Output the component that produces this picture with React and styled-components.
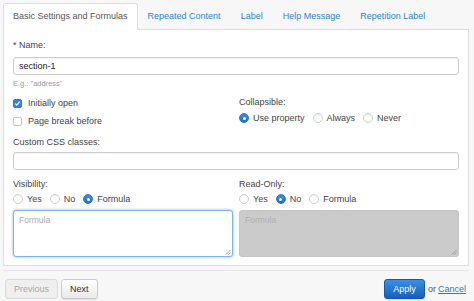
import React from 'react';
import styled, { createGlobalStyle } from 'styled-components';

const GlobalStyle = createGlobalStyle`
  html, body {
    margin: 0;
    padding: 0;
    background: #f7f7f7;
  }
  body {
    font-family: "Liberation Sans", Arial, sans-serif;
    font-size: 9px;
    color: #444;
  }
`;

const Page = styled.div`
  width: 474px;
  height: 301px;
  padding: 3px 5px 0 3px;
  box-sizing: border-box;
  overflow: hidden;
`;

const TabBar = styled.div`
  display: flex;
  height: 26px;
  align-items: stretch;
`;

const Tab = styled.div`
  padding: 0 9px;
  line-height: 25px;
  white-space: nowrap;
  color: ${p => (p.$active ? '#555' : '#2e85c7')};
  background: ${p => (p.$active ? '#fff' : 'transparent')};
  border: 1px solid ${p => (p.$active ? '#ddd' : 'transparent')};
  border-bottom: none;
  border-radius: 3px 3px 0 0;
  position: relative;
  z-index: 1;
  height: 27px;
  box-sizing: border-box;
`;

const Panel = styled.div`
  background: #fff;
  border: 1px solid #ddd;
  padding: 9px 9px 8px;
  width: 466px;
  box-sizing: border-box;
`;

const Label = styled.div`
  line-height: 12px;
  color: #444;
  margin-top: ${p => p.$mt || 0}px;
`;

const TextInput = styled.div`
  height: 18px;
  box-sizing: border-box;
  border: 1px solid #ccc;
  border-radius: 3px;
  background: #fff;
  padding: 0 5px;
  line-height: 16px;
  color: #222;
  font-size: 9px;
  margin-top: ${p => p.$mt || 0}px;
  box-shadow: inset 0 1px 1px rgba(0, 0, 0, 0.04);
`;

const Hint = styled.div`
  font-size: 7.5px;
  color: #999;
  line-height: 10px;
  margin-top: 4px;
`;

const Columns = styled.div`
  display: grid;
  grid-template-columns: 220px 220px;
  column-gap: 6px;
  margin-top: ${p => p.$mt || 0}px;
`;

const Col = styled.div`
  display: flex;
  flex-direction: column;
`;

const CheckRow = styled.label`
  display: flex;
  align-items: center;
  gap: 6px;
  height: 16px;
  margin-bottom: 2px;
  color: #444;
`;

const Box = styled.span`
  width: 9px;
  height: 9px;
  box-sizing: border-box;
  border-radius: 2px;
  display: inline-flex;
  align-items: center;
  justify-content: center;
  border: 1px solid ${p => (p.$checked ? '#2c78d8' : '#c4c4c4')};
  background: ${p => (p.$checked ? '#3484e4' : '#fff')};
`;

const RadioRow = styled.div`
  display: flex;
  align-items: center;
  height: ${p => p.$h || 14}px;
  margin-top: ${p => p.$mt || 0}px;
`;

const RadioItem = styled.label`
  display: flex;
  align-items: center;
  gap: 4px;
  margin-right: 8px;
  color: #444;
`;

const Dot = styled.span`
  width: 10px;
  height: 10px;
  box-sizing: border-box;
  border-radius: 50%;
  display: inline-flex;
  align-items: center;
  justify-content: center;
  border: 1px solid ${p => (p.$on ? '#2676d6' : '#cfcfcf')};
  background: ${p => (p.$on ? 'linear-gradient(#3b8ded, #1f6fd2)' : '#fff')};
  box-shadow: ${p => (p.$on ? 'none' : 'inset 0 1px 1px rgba(0,0,0,0.06)')};
  &::after {
    content: '';
    display: ${p => (p.$on ? 'block' : 'none')};
    width: 3px;
    height: 3px;
    border-radius: 50%;
    background: #fff;
  }
`;

const TextArea = styled.div`
  height: 47px;
  box-sizing: border-box;
  margin-top: 4px;
  border-radius: 3px;
  padding: 4px 5px;
  font-size: 8.5px;
  color: ${p => (p.$disabled ? '#b0b0b0' : '#aaa')};
  background: ${p => (p.$disabled ? '#cbcbcb' : '#fff')};
  border: 1px solid ${p => (p.$focus ? '#7fb4ea' : p.$disabled ? '#c4c4c4' : '#ccc')};
  box-shadow: ${p => (p.$focus ? '0 0 3px rgba(80, 150, 230, 0.7)' : 'none')};
  position: relative;
`;

const Grip = styled.svg`
  position: absolute;
  right: 1px;
  bottom: 1px;
`;

const Footer = styled.div`
  margin-top: 4px;
  border-top: 1px solid #e2e2e2;
  padding: 8px 3px 0 2px;
  display: flex;
  justify-content: space-between;
  align-items: center;
`;

const ButtonGroup = styled.div`
  display: flex;
  align-items: center;
  gap: 3px;
`;

const Button = styled.button`
  height: 20px;
  padding: 0 8px;
  font-family: inherit;
  font-size: 9px;
  border-radius: 3px;
  border: 1px solid #ccc;
  color: #333;
  background: linear-gradient(#ffffff, #e9e9e9);
  box-shadow: 0 1px 1px rgba(0, 0, 0, 0.1);
  cursor: pointer;
  &:disabled {
    color: #a8a8a8;
    background: #efefef;
    border-color: #dadada;
    box-shadow: none;
    cursor: default;
  }
`;

const PrimaryButton = styled(Button)`
  width: 41px;
  padding: 0;
  color: #fff;
  border-color: #1459ad;
  background: linear-gradient(#3a8fe6, #1560bd);
`;

const Or = styled.span`
  color: #555;
`;

const CancelLink = styled.a`
  margin-left: -1px;
  color: #2a7cc7;
  text-decoration: underline;
`;

function Check({ checked, children }) {
  return (
    <CheckRow>
      <Box $checked={checked}>
        {checked && (
          <svg width="7" height="7" viewBox="0 0 7 7">
            <path d="M1.2 3.6 L2.8 5.1 L5.8 1.6" stroke="#fff" strokeWidth="1.2" fill="none" />
          </svg>
        )}
      </Box>
      {children}
    </CheckRow>
  );
}

function Radios({ options, value, h, mt }) {
  return (
    <RadioRow $h={h} $mt={mt}>
      {options.map(o => (
        <RadioItem key={o}>
          <Dot $on={o === value} />
          {o}
        </RadioItem>
      ))}
    </RadioRow>
  );
}

function ResizeGrip() {
  return (
    <Grip width="6" height="6" viewBox="0 0 6 6">
      <path d="M5.5 1 L1 5.5 M5.5 3.5 L3.5 5.5" stroke="#888" strokeWidth="0.7" />
    </Grip>
  );
}

const tabs = ['Basic Settings and Formulas', 'Repeated Content', 'Label', 'Help Message', 'Repetition Label'];

export default function App() {
  return (
    <Page>
      <GlobalStyle />
      <TabBar>
        {tabs.map((t, i) => (
          <Tab key={t} $active={i === 0}>{t}</Tab>
        ))}
      </TabBar>
      <Panel>
        <Label>* Name:</Label>
        <TextInput $mt={6}>section-1</TextInput>
        <Hint>E.g.: "address"</Hint>

        <Columns $mt={6}>
          <Col>
            <Check checked>Initially open</Check>
            <Check>Page break before</Check>
          </Col>
          <Col>
            <Label $mt={1}>Collapsible:</Label>
            <Radios options={['Use property', 'Always', 'Never']} value="Use property" h={16} mt={2} />
          </Col>
        </Columns>

        <Label $mt={5}>Custom CSS classes:</Label>
        <TextInput $mt={4} />

        <Columns $mt={8}>
          <Col>
            <Label>Visibility:</Label>
            <Radios options={['Yes', 'No', 'Formula']} value="Formula" mt={2} />
            <TextArea $focus>
              Formula
              <ResizeGrip />
            </TextArea>
          </Col>
          <Col>
            <Label>Read-Only:</Label>
            <Radios options={['Yes', 'No', 'Formula']} value="No" mt={2} />
            <TextArea $disabled>
              Formula
              <ResizeGrip />
            </TextArea>
          </Col>
        </Columns>
      </Panel>
      <Footer>
        <ButtonGroup>
          <Button disabled>Previous</Button>
          <Button>Next</Button>
        </ButtonGroup>
        <ButtonGroup>
          <PrimaryButton>Apply</PrimaryButton>
          <Or>or</Or>
          <CancelLink href="#">Cancel</CancelLink>
        </ButtonGroup>
      </Footer>
    </Page>
  );
}
